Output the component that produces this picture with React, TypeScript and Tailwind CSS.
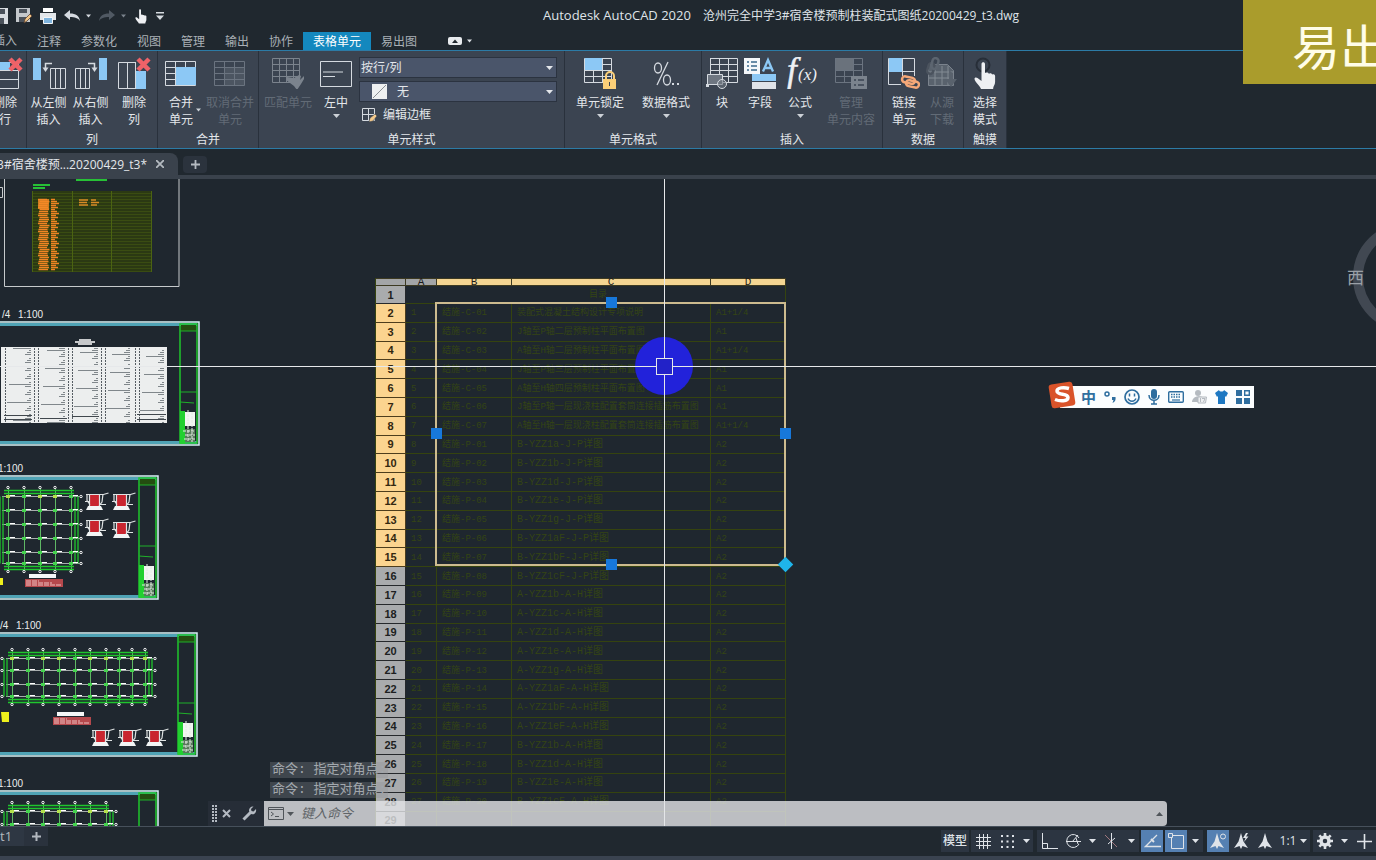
import type { ReactNode } from "react";
import clsx from "clsx";

const ui = "font-['Open_Sans','Noto_Sans_CJK_SC',sans-serif]";
const mono = "font-['Liberation_Mono','Noto_Sans_CJK_SC',monospace]";

const menuTabs = ["注释", "参数化", "视图", "管理", "输出", "协作", "表格单元", "易出图"];

const details: [string, string, string][] = [
  ["结施-C-01", "装配式混凝土结构设计专项说明", "A1+1/4"],
  ["结施-C-02", "J轴至P轴二层预制柱平面布置图", "A1"],
  ["结施-C-03", "A轴至H轴二层预制柱平面布置图", "A1+1/4"],
  ["结施-C-04", "J轴至P轴三层预制柱平面布置图", "A1"],
  ["结施-C-05", "A轴至H轴四层预制柱平面布置图", "A1"],
  ["结施-C-06", "J轴至P轴一层现浇柱配置套筒连接插筋布置图", "A1"],
  ["结施-C-07", "A轴至H轴一层现浇柱配置套筒连接插筋布置图", "A1+1/4"],
  ["结施-P-01", "B-YZZ1a-J-P详图", "A2"],
  ["结施-P-02", "B-YZZ1b-J-P详图", "A2"],
  ["结施-P-03", "B-YZZ1d-J-P详图", "A2"],
  ["结施-P-04", "B-YZZ1e-J-P详图", "A2"],
  ["结施-P-05", "B-YZZ1g-J-P详图", "A2"],
  ["结施-P-06", "B-YZZ1aF-J-P详图", "A2"],
  ["结施-P-07", "B-YZZ1bF-J-P详图", "A2"],
  ["结施-P-08", "B-YZZ1cF-J-P详图", "A2"],
  ["结施-P-09", "A-YZZ1b-A-H详图", "A2"],
  ["结施-P-10", "A-YZZ1c-A-H详图", "A2"],
  ["结施-P-11", "A-YZZ1d-A-H详图", "A2"],
  ["结施-P-12", "A-YZZ1e-A-H详图", "A2"],
  ["结施-P-13", "A-YZZ1g-A-H详图", "A2"],
  ["结施-P-14", "A-YZZ1aF-A-H详图", "A2"],
  ["结施-P-15", "A-YZZ1bF-A-H详图", "A2"],
  ["结施-P-16", "A-YZZ1eF-A-H详图", "A2"],
  ["结施-P-17", "B-YZZ1b-A-H详图", "A2"],
  ["结施-P-18", "B-YZZ1d-A-H详图", "A2"],
  ["结施-P-19", "B-YZZ1e-A-H详图", "A2"],
  ["结施-P-20", "B-YZZ1cF-A-H详图", "A2"],
  ["", "", ""],
];

function Caret({ className }: { className?: string }) {
  return (
    <svg aria-hidden width="7" height="4" viewBox="0 0 7 4" className={clsx("shrink-0", className)}>
      <path d="M0 0h7L3.5 4z" fill="currentColor" />
    </svg>
  );
}

function Icon({ w = 32, h = 32, children }: { w?: number; h?: number; children: ReactNode }) {
  return (
    <svg aria-hidden width={w} height={h} viewBox={`0 0 ${w} ${h}`} fill="none" className="shrink-0">
      {children}
    </svg>
  );
}

const sky = "#8cc8f5";
const line = "#d5dae0";
const dim = "#6b7480";
const RedX = ({ x, y }: { x: number; y: number }) => (
  <path d={`M${x} ${y}l11 11M${x + 11} ${y}l-11 11`} stroke="#ee6268" strokeWidth="4.500" />
);

const icons = {
  deleteRow: (
    <Icon w={35}>
      <path d="M2.500 5.500h28v26h-28zM2 13.500h29M2 22.500h29" stroke={line} />
      <path d="M2 5h20v8H2z" fill={sky} />
      <RedX x={22} y={2} />
    </Icon>
  ),
  insertLeft: (
    <Icon w={34}>
      <path d="M1 1h8v22H1z" fill={sky} />
      <path d="M18.500 11.500h15v20h-15zM23.500 11.500v20M28.500 11.500v20" stroke={line} />
      <path d="M20 6.500h-6.500v6" stroke={line} strokeWidth="1.500" />
      <path d="M10.500 10.500h6L13.500 15z" fill={line} />
    </Icon>
  ),
  insertRight: (
    <Icon w={34}>
      <path d="M25 1h8v22h-8z" fill={sky} />
      <path d="M1.500 11.500h14v20h-14zM6.500 11.500v20M11.500 11.500v20" stroke={line} />
      <path d="M14 6.500h6.500v6" stroke={line} strokeWidth="1.500" />
      <path d="M17.500 10.500h6L20.500 15z" fill={line} />
    </Icon>
  ),
  deleteColumn: (
    <Icon w={34}>
      <path d="M1.500 5.500h27v26h-27zM10.500 5v27" stroke={line} />
      <path d="M19 14h10v18H19z" fill={sky} />
      <path d="M19 5h11v9H19z" fill="#3b4451" />
      <path d="M18.500 5v27" stroke={line} />
      <RedX x={21} y={2} />
    </Icon>
  ),
  merge: (
    <Icon>
      <path d="M.5 4.500h30v24H.5zM0 10.500h31M0 16.500h11M0 22.500h11M10.500 4v25M20.500 4v7" stroke={line} />
      <path d="M11 10h20v18H11z" fill={sky} />
    </Icon>
  ),
  unmerge: (
    <Icon>
      <path d="M11 10h20v18H11z" fill="#4c5561" />
      <path d="M.5 4.500h30v24H.5zM0 10.500h31M0 16.500h31M0 22.500h31M10.500 4v25M20.500 4v25" stroke={dim} />
    </Icon>
  ),
  matchCell: (
    <Icon>
      <path d="M.5 1.500h27v24H.5zM0 7.500h28M0 13.500h28M0 19.500h28M7.500 1v25M14.500 1v25M21.500 1v25" stroke="#7b838d" />
      <path d="M15 20l7 1 5-3 2 1-1 4 4-4v3l-3 5-4 6-3-4-4-3-4-3z" fill="#7b838d" />
    </Icon>
  ),
  alignMiddle: (
    <Icon>
      <path d="M.5 4.500h31v25H.5z" stroke={line} />
      <path d="M3 15h20M3 19.500h12" stroke={line} />
    </Icon>
  ),
  cellLock: (
    <Icon w={33}>
      <path d="M.5 1.500h27v24H.5zM18.500 1v25M9.500 13v13M0 13.500h28M0 19.500h28M19 7.500h9" stroke={line} />
      <path d="M1 1h17v12H1z" fill={sky} />
      <path d="M22 23v-4a4 4 0 0 1 8 0v4" stroke="#fbcf78" strokeWidth="2" />
      <path d="M19 22h13v11H19z" fill="#fbcf78" />
      <path d="M25.500 25v4" stroke="#3b4451" />
    </Icon>
  ),
  percent: (
    <Icon w={28}>
      <ellipse cx="6" cy="11" rx="3.500" ry="5" stroke={line} strokeWidth="1.300" />
      <ellipse cx="15" cy="23" rx="3.500" ry="5" stroke={line} strokeWidth="1.300" />
      <path d="M16 5L5 28" stroke={line} strokeWidth="1.300" />
      <path d="M20 26h2v2h-2zM25 26h2v2h-2z" fill={line} />
    </Icon>
  ),
  block: (
    <Icon>
      <path d="M4.500 1.500h27v24H12M4.500 1v16M4 7.500h27M4 13.500h27M15 19.500h16M13.500 1v17M22.500 1v24" stroke={line} />
      <path d="M1.500 17.500h15v10H1.500z" fill="#6e7681" stroke={line} />
      <circle cx="16" cy="27" r="4.500" stroke={line} fill="#6e7681" fillOpacity=".6" />
      <path d="M0 27h3v3H0z" fill={line} />
    </Icon>
  ),
  field: (
    <Icon>
      <path d="M0 1h16v16H0z" fill="#f4f7fa" />
      <path d="M3 5h2M3 9h2M3 13h2M7 5h6M7 9h6M7 13h6" stroke="#3a6a8c" strokeWidth="1.500" />
      <path d="M8 17h24v7H8z" fill={sky} />
      <path d="M8 25h24v7H8z" fill="#e0e3e8" />
      <path d="M19 14.500L24 3l5 11.500M21 11h6.500" stroke={sky} strokeWidth="2.300" />
    </Icon>
  ),
  formula: (
    <Icon w={34}>
      <text x="4" y="25" fill="#eef0f3" stroke="#eef0f3" strokeWidth=".5" fontSize="35" fontStyle="italic" fontFamily="Liberation Serif, serif">f</text>
      <text x="15" y="23" fill="#eef0f3" fontSize="17" fontStyle="italic" fontFamily="Liberation Serif, serif">(x)</text>
    </Icon>
  ),
  manage: (
    <Icon>
      <path d="M0 1h19v12H0z" fill="#6a727c" />
      <path d="M.5 1.500h27v24H.5zM18.500 1v18M9.500 13v13M0 13.500h28M0 19.500h16M19 7.500h9" stroke={dim} />
      <path d="M16 19h16v13H16z" fill="#7b838d" />
      <path d="M19 23h2M19 28h2M23 23h6M23 28h6" stroke="#3b4451" strokeWidth="1.500" />
    </Icon>
  ),
  link: (
    <Icon>
      <path d="M.5 1.500h26v26H.5zM14.500 1v27M0 14.500h27" stroke={line} />
      <path d="M1 1h13v14H1z" fill={sky} />
      <path d="M13 19h19v13H13z" fill="#3b4451" />
      <g stroke="#f5a878" strokeWidth="2.500">
        <rect x="14" y="20" width="13" height="6" rx="3" transform="rotate(12 20 23)" />
        <rect x="18" y="24" width="13" height="6" rx="3" transform="rotate(12 25 27)" />
      </g>
    </Icon>
  ),
  download: (
    <Icon>
      <path d="M2.500 7.500h19l6 6v15h-25z" fill="#59626d" stroke="#7b838d" />
      <path d="M3 15h24M3 21h24M9 9v19M16 9v19M22 9v19" stroke="#838b94" />
      <rect x="2" y="6" width="6" height="11" rx="3" transform="rotate(15 5 11)" stroke="#4b535e" strokeWidth="2.500" />
      <rect x="6" y="1" width="6" height="11" rx="3" transform="rotate(15 9 6)" stroke="#5c6570" strokeWidth="2.500" />
      <path d="M23 14c3 0 4 3 4 8h4l-6 8-6-8h4z" fill="#59626d" />
    </Icon>
  ),
  touch: (
    <Icon w={24}>
      <circle cx="10" cy="8" r="6.500" stroke="#272e38" strokeWidth="2" />
      <Hand />
    </Icon>
  ),
};

function Hand() {
  return (
    <path
      d="M8.500 7c0-2.500 3.500-2.500 3.500 0v9c1-1 3.500-.8 3.800.7 1-1 3-.6 3.300.9 1.200-.7 3-.2 3 1.400v6c0 3-2 4-2 7H8c-1-3-6-7-6.500-10-.3-1.800 2-2 3-1l4 3z"
      fill="#eef0f3"
    />
  );
}

type ToolProps = {
  icon: ReactNode;
  lines: string[];
  width: string;
  dim?: boolean;
  menu?: boolean;
};

function Tool({ icon, lines, width, dim: off, menu }: ToolProps) {
  return (
    <button
      type="button"
      disabled={off}
      className={clsx(
        "flex shrink-0 flex-col items-center whitespace-nowrap text-xs leading-[17px]",
        width,
        off ? "text-[#626b76]" : "text-[#e4e7eb]",
      )}
    >
      <span className="mb-[5px] flex h-8 items-start">{icon}</span>
      {lines.map((l) => (
        <span key={l}>{l}</span>
      ))}
      {menu && <Caret className="mt-[3px] text-[#ccd1d7]" />}
    </button>
  );
}

function Panel({ title, width, children }: { title: string; width: string; children: ReactNode }) {
  return (
    <section className={clsx("flex shrink-0 flex-col border-r border-[#29313c]", width)}>
      <div className="flex flex-1 justify-center pt-[6px]">{children}</div>
      <h2 className="text-center text-xs leading-4 text-[#e4e7eb]">{title}</h2>
    </section>
  );
}

function QuickAccess() {
  return (
    <div className="flex w-[168px] shrink-0 items-center gap-2 text-[#d5dae0]">
      <button type="button" aria-label="保存" className="-ml-2">
        <Icon w={16} h={16}>
          <path d="M0 0h16v16H0z" fill="#d8dce0" />
          <path d="M3 1h10v5H3zM4 10h8v6H4z" fill="#4a515a" />
        </Icon>
      </button>
      <button type="button" aria-label="另存为">
        <Icon w={16} h={16}>
          <path d="M0 0h14v14H0z" fill="#c4c8cc" />
          <path d="M3 1h8v4H3zM3 9h7v5H3z" fill="#4a515a" />
          <path d="M8 15l1-4 5-5 2 2-5 5z" fill="#f3c88a" stroke="#5a4030" strokeWidth=".8" />
        </Icon>
      </button>
      <button type="button" aria-label="打印">
        <Icon w={16} h={16}>
          <path d="M3 0h10v4H3z" fill="#fff" />
          <path d="M0 5h16v7H0z" fill="#e3e6ea" />
          <path d="M3.500 9.500h9v6h-9z" fill="#7fb4de" stroke="#f3f5f7" />
        </Icon>
      </button>
      <button type="button" aria-label="放弃" className="flex items-center gap-[6px]">
        <Icon w={16} h={12}>
          <path d="M0 5l6-5v3.500c6 0 9 2 10 7.500-2-3-5-4-10-4v3z" fill="#d5dae0" />
        </Icon>
        <Caret className="w-[5px]" />
      </button>
      <button type="button" aria-label="重做" className="flex items-center gap-[6px]">
        <Icon w={16} h={12}>
          <path d="M16 5l-6-5v3.500C4 3.500 1 5.500 0 11c2-3 5-4 10-4v3z" fill="#505963" />
        </Icon>
        <Caret className="w-[5px] text-[#7b838d]" />
      </button>
      <button type="button" aria-label="触摸">
        <svg aria-hidden width="14" height="16" viewBox="0 3 24 30"><Hand /></svg>
      </button>
      <button type="button" aria-label="自定义快速访问工具栏">
        <Icon w={8} h={8}>
          <path d="M0 0h8v1.500H0zM0 3.500h8L4 8z" fill="#d5dae0" />
        </Icon>
      </button>
    </div>
  );
}

function Ribbon() {
  return (
    <div className="flex h-[99px] shrink-0 border-y border-[#2c7ba6] bg-[#20282f]">
      <div className="flex bg-[#3b4451]">
        <section className="flex w-[27px] shrink-0 justify-end overflow-hidden border-r border-[#29313c] pt-[6px]">
          <Tool icon={icons.deleteRow} lines={["删除", "行"]} width="w-[42px]" />
        </section>
        <Panel title="列" width="w-[131px]">
          <Tool icon={icons.insertLeft} lines={["从左侧", "插入"]} width="w-[42px]" />
          <Tool icon={icons.insertRight} lines={["从右侧", "插入"]} width="w-[42px]" />
          <Tool icon={icons.deleteColumn} lines={["删除", "列"]} width="w-[45px]" />
        </Panel>
        <Panel title="合并" width="w-[101px]">
          <div className="relative">
            <Tool icon={icons.merge} lines={["合并", "单元"]} width="w-[44px]" />
            <Caret className="absolute top-[51px] right-[2px] w-[5px] text-[#ccd1d7]" />
          </div>
          <Tool icon={icons.unmerge} lines={["取消合并", "单元"]} width="w-[54px]" dim />
        </Panel>
        <Panel title="单元样式" width="w-[306px]">
          <Tool icon={icons.matchCell} lines={["匹配单元"]} width="w-[54px]" dim />
          <Tool icon={icons.alignMiddle} lines={["左中"]} width="w-[42px]" menu />
          <div className="mr-[5px] ml-[2px] flex w-[198px] flex-col gap-[3px] text-xs text-[#e4e7eb]">
            <div className="relative flex h-[21px] items-center border border-[#2b3340] bg-[#4a556a]">
              <select aria-label="按行/列" className="h-full w-full appearance-none px-px">
                <option>按行/列</option>
              </select>
              <Caret className="pointer-events-none absolute right-[3px]" />
            </div>
            <div className="relative flex h-[21px] items-center border border-[#2b3340] bg-[#4a556a]">
              <span className="ml-3 flex">
                <Icon w={15} h={15}>
                  <path d="M0 0h15v15H0z" fill="#eef0f1" />
                  <path d="M1 14L14 1" stroke="#8b8f94" />
                </Icon>
              </span>
              <select aria-label="单元背景" className="h-full w-full appearance-none px-[10px]">
                <option>无</option>
              </select>
              <Caret className="pointer-events-none absolute right-[3px]" />
            </div>
            <button type="button" className="flex items-center gap-[6px] pl-[3px] leading-5">
              <Icon w={15} h={15}>
                <path d="M.5.500h12v12H.5zM6.500 0v13M0 6.500h13" stroke={line} />
                <path d="M7 14l1-4 5-4 2 2-4 5z" fill="#f3c88a" stroke="#3b4451" strokeWidth=".6" />
              </Icon>
              编辑边框
            </button>
          </div>
        </Panel>
        <Panel title="单元格式" width="w-[137px]">
          <Tool icon={icons.cellLock} lines={["单元锁定"]} width="w-[66px]" menu />
          <Tool icon={icons.percent} lines={["数据格式"]} width="w-[66px]" menu />
        </Panel>
        <Panel title="插入" width="w-[181px]">
          <Tool icon={icons.block} lines={["块"]} width="w-[38px]" />
          <Tool icon={icons.field} lines={["字段"]} width="w-[38px]" />
          <Tool icon={icons.formula} lines={["公式"]} width="w-[42px]" menu />
          <Tool icon={icons.manage} lines={["管理", "单元内容"]} width="w-[60px]" dim />
        </Panel>
        <Panel title="数据" width="w-[81px]">
          <Tool icon={icons.link} lines={["链接", "单元"]} width="w-[38px]" />
          <Tool icon={icons.download} lines={["从源", "下载"]} width="w-[38px]" dim />
        </Panel>
        <Panel title="触摸" width="w-[43px]">
          <Tool icon={icons.touch} lines={["选择", "模式"]} width="w-[40px]" />
        </Panel>
      </div>
    </div>
  );
}

// sheet border with the green title block on its right side
function Sheet({ y, right, h = 123 }: { y: number; right: number; h?: number }) {
  const s = right - 19;
  return (
    <g fill="none">
      <path d={`M0 ${y + 2.500}H${right - 2}M0 ${y + h - 2.500}H${right - 2}`} stroke="#4fa3b5" strokeWidth="3" />
      <path d={`M0 ${y}H${right}V${y + h}H0`} stroke="#d8f4f6" strokeWidth="1.500" />
      <path d={`M${s + 1} ${y + 3}h15v6h-15z`} fill="#244d10" />
      <path d={`M${s} ${y + 2}h17v${h - 4}h-17z`} stroke="#1fc62c" strokeWidth="1.500" />
      <path d={`M${s} ${y + 9}h17M${s} ${y + 70}h17M${s} ${y + 80}l14 1`} stroke="#1fb02a" />
      <path d={`M${s} ${y + 89}h5v33h-5z`} fill="#22d030" />
      <path d={`M${s + 5} ${y + 90}h10v14h-10z`} fill="#f2f5f2" />
      <path d={`M${s + 5} ${y + 107}h10v13h-10z`} fill="#587a5c" />
      <path d={`M${s + 3} ${y + 109}h12M${s + 5} ${y + 113}h10M${s + 4} ${y + 117}h11M${s + 8} ${y + 88}v32M${s + 12} ${y + 90}v30`} stroke="#e4ece4" strokeDasharray="3 1" />
    </g>
  );
}

function FloorPlan({ cols, rows }: { cols: number[]; rows: number[] }) {
  const l = cols[0];
  const r = cols[cols.length - 1];
  const t = rows[0];
  const b = rows[rows.length - 1];
  return (
    <g fill="none">
      {rows.map((y) => (
        <path key={y} d={`M${l - 6} ${y}H${r + 8}`} stroke="#a8aeae" />
      ))}
      {cols.map((x) => (
        <path key={x} d={`M${x + 0.5} ${t - 8}V${b + 7}`} stroke="#5fb865" />
      ))}
      <path
        d={`M${l - 4} ${t - 6}H${r + 3}M${l - 4} ${t - 3}H${r + 3}M${l - 4} ${b + 3}H${r + 3}M${l - 4} ${b + 6}H${r + 3}M${l - 8} ${t}V${b}M${l - 5} ${t}V${b}M${r + 4} ${t}V${b}M${r + 7} ${t}V${b}`}
        stroke="#1fc62d"
        strokeWidth="1.300"
      />
      {rows.map((y) =>
        cols.map((x, i) => (
          <g key={`${x}-${y}`}>
            <path d={`M${x - 2} ${y - 1.500}h4v3h-4z`} fill={y === t && i % 3 !== 1 ? "#b4e04c" : "#43d34d"} />
            <path d={`M${x + 2} ${y - 1}h5`} stroke="#fff" />
          </g>
        )),
      )}
      {cols.map((x) => (
        <g key={x} stroke="#f4f6f6">
          <circle cx={x} cy={t - 9} r="1.200" />
          <circle cx={x} cy={b + 8} r="1.200" />
        </g>
      ))}
      {rows.map((y) => (
        <g key={y} stroke="#f4f6f6">
          <circle cx={l - 10} cy={y} r="1.200" />
          <circle cx={r + 10} cy={y} r="1.200" />
        </g>
      ))}
    </g>
  );
}

function Section({ x, y }: { x: number; y: number }) {
  return (
    <g>
      <path d={`M${x + 4} ${y + 1}h9v11H${x + 4}z`} fill="#c9252f" />
      <path
        d={`M${x} ${y + .5}h17.500l5-1.500M${x + 1} ${y + .5}v6l3 4M${x + 17} ${y}l-1 8-3 4M${x + 3.500} ${y}v12M${x + 13.500} ${y}v12M${x - 1} ${y + 7.500}h5M${x + 13} ${y + 10.500}h7`}
        fill="none"
        stroke="#dfe3e3"
        strokeWidth="1.200"
      />
      <path d={`M${x + 2} ${y + 12}h13l2 4H${x}z`} fill="#f2f5f5" />
    </g>
  );
}

function Note({ x, y }: { x: number; y: number }) {
  return (
    <g>
      <path d={`M${x + 4} ${y - 5}h27v4h-27z`} fill="#f5f7f7" />
      <path d={`M${x} ${y}h38v8H${x}z`} fill="#b5484c" />
      <path d={`M${x + 1} ${y + 2}h13M${x + 1} ${y + 4}h26M${x + 1} ${y + 6}h35`} stroke="#efc0c0" strokeDasharray="5 1" />
    </g>
  );
}

const scheduleBands = [3, 37, 70, 102, 136];

function Drawings() {
  return (
    <svg aria-hidden width="205" height="660" viewBox="0 179 205 660" className="absolute top-0 left-0">
      {/* quantity sheet */}
      <path d="M4.500 179v107.500h174.500V179" fill="none" stroke="#c6cacc" />
      <path d="M0 187.500h2.500v10H0" fill="none" stroke="#c6cacc" />
      <path d="M76 179h31v2H76zM33 184h17v2H33zM33 187h12v2H33z" fill="#27c136" />
      <path d="M32 191h120v81H32z" fill="#2b3913" />
      {Array.from({ length: 27 }, (_, i) => (
        <path key={i} d={`M32 ${193.500 + i * 3}h120`} stroke="#3a4c12" />
      ))}
      <path d="M32.500 191v81M72.500 191v81M111.500 191v81M151.500 191v81" stroke="#4b6312" />
      {Array.from({ length: 36 }, (_, i) => (
        <path
          key={i}
          d={`M${38 + ((i * 3) % 4) / 2} ${199.500 + i * 2}h${9 + ((i * 5) % 3) / 2}M${51} ${199.500 + i * 2}h${4 + ((i * 7) % 5)}`}
          stroke="#f08423"
          strokeWidth="1.700"
        />
      ))}
      <path d="M38 199h11v10H38z" fill="#f58a26" fillOpacity=".8" />
      <path d="M79 200h9M79 202.500h8M79 205h9M91 200h5M91 202.500h8M91 205h6" stroke="#d98a26" strokeWidth="1.500" />

      {/* general notes */}
      <Sheet y={322} right={199} />
      <path d="M75 342h20M79 340h12M78 344h14" stroke="#fff" strokeWidth="1.500" />
      <path d="M1 347h166v76H1z" fill="#eceeee" />
      {scheduleBands.map((x, b) =>
        Array.from({ length: 38 }, (_, i) => {
          const w = ((i * 13 + b * 7) % 4) * 2 + ((i * 7 + b * 11) % 9 === 0 ? 18 : 0);
          return <path key={`${b}-${i}`} d={`M${x + 28 - w} ${348.500 + i * 2}h${w}`} stroke="#656c71" strokeWidth=".8" />;
        }),
      )}
      <path d="M5.500 348v75M34.500 348v75M38.500 348v75M68.500 348v75M72.500 348v75M101.500 348v75M105.500 348v75M135.500 348v75M139.500 348v75" stroke="#555c62" strokeDasharray="2 1" />
      <path d="M4 415.500h28M4 419.500h28M40 418.500h27M72 416.500h27M137 414.500h29M137 419.500h29" stroke="#40474d" />

      <Sheet y={476} right={158} />
      <FloorPlan cols={[8, 24, 40, 55, 71]} rows={[496.500, 510.500, 524.500, 538.500, 552.500, 563.500]} />
      <Section x={86} y={494} />
      <Section x={113} y={494} />
      <Section x={86} y={520} />
      <Section x={113} y={522} />
      <path d="M0 578h3v7H0z" fill="#eef01c" />
      <Note x={25} y={579} />

      <Sheet y={633} right={197} />
      <FloorPlan cols={[12, 28, 43, 59, 75, 90, 106, 119, 132, 145]} rows={[658.500, 670.500, 684.500, 696.500]} />
      <path d="M1 712h8v10H2z" fill="#eef01c" />
      <Note x={53} y={717} />
      <Section x={92} y={730} />
      <Section x={119} y={730} />
      <Section x={146} y={730} />

      <Sheet y={791} right={158} />
      <FloorPlan cols={[12, 28, 43, 59, 75, 90, 106]} rows={[811.500, 824.500, 838.500]} />

      <g fill="#eceeee" fontFamily="Liberation Sans, sans-serif" fontSize="10">
        <text x="2" y="318">/4</text>
        <text x="18" y="318">1:100</text>
        <text x="-2" y="472">1:100</text>
        <text x="0" y="629">/4</text>
        <text x="16" y="629">1:100</text>
        <text x="-2" y="787">1:100</text>
      </g>
    </svg>
  );
}

const columnHead = "h-[8px] border border-l-0 border-[#3d3a22] p-0 text-center font-normal";
const bodyCell = "border-r border-b border-[#35430f] p-0 pt-px pl-[5px] font-normal";

function Catalogue() {
  return (
    <div className="absolute top-[99px] left-[375px]">
      <table
        className={clsx(
          "h-[551px] w-[411px] table-fixed border-separate border-spacing-0 border-l border-[#35430f] text-left text-[9px] leading-[10px] text-[#344414]",
          mono,
        )}
      >
        <colgroup>
          <col className="w-[30px]" />
          <col className="w-[31px]" />
          <col className="w-[75px]" />
          <col className="w-[199px]" />
          <col className="w-[75px]" />
        </colgroup>
        <thead>
          <tr className="text-[11px] leading-[6px] text-[#1c1c1c]">
            <th aria-label="行" className={clsx(columnHead, "bg-[#a3a5a7]")} />
            <th className={clsx(columnHead, "bg-[#a3a5a7]")}>A</th>
            <th className={clsx(columnHead, "bg-[#f4d592]")}>B</th>
            <th className={clsx(columnHead, "bg-[#f4d592]")}>C</th>
            <th className={clsx(columnHead, "bg-[#f4d592]")}>D</th>
          </tr>
        </thead>
        <tbody>
          <tr className="h-[18px]">
            <RowHead n={1} />
            <td colSpan={4} className={clsx(bodyCell, "pl-0 text-center")}>目录</td>
          </tr>
          {details.map(([no, name, size], i) => (
            <tr key={i}>
              <RowHead n={i + 2} />
              <td className={bodyCell}>{no && i + 1}</td>
              <td className={bodyCell}>{no}</td>
              <td className={clsx(bodyCell, "whitespace-nowrap", i > 6 && "text-[10px]")}>{name}</td>
              <td className={bodyCell}>{size}</td>
            </tr>
          ))}
        </tbody>
      </table>

      {/* selected cell range with its grips */}
      <div className="absolute top-[24px] left-[60px] h-[264px] w-[351px] border-2 border-[#cdbb8f]">
        <Grip className="-top-[7px] left-[169px]" />
        <Grip className="top-[124px] -left-[6px]" />
        <Grip className="top-[124px] -right-[7px]" />
        <Grip className="-bottom-[6px] left-[169px]" />
        <span className="absolute -right-[7px] -bottom-[6px] size-[11px] rotate-45 bg-[#1fb4ea]" />
      </div>
    </div>
  );
}

function RowHead({ n }: { n: number }) {
  const picked = n > 1 && n < 16;
  return (
    <th
      scope="row"
      className={clsx(
        "border-r border-b p-0 text-center font-['Liberation_Sans',sans-serif] text-[11px] font-bold",
        picked ? "border-[#4d3d1c] bg-[#fbd48f] text-[#33270f]" : "border-[#25282b] bg-[#a9abad] text-[#1d1f21]",
      )}
    >
      {n}
    </th>
  );
}

function Grip({ className }: { className: string }) {
  return <span className={clsx("absolute size-[11px] bg-[#1778db]", className)} />;
}

function Crosshair() {
  return (
    <>
      <div className="absolute top-[158px] left-[635px] size-[58px] rounded-full bg-[#2222da]" />
      <div className="absolute top-0 bottom-0 left-[664px] w-px bg-[#e6e8ea]" />
      <div className="absolute top-[187px] right-0 left-0 h-px bg-[#e6e8ea]" />
      <div className="absolute top-[179px] left-[656px] size-[17px] border border-[#e6e8ea] bg-[#2222c8]" />
    </>
  );
}

function ImeBar() {
  return (
    <div className="absolute top-[207px] left-[1060px] flex h-[22px] items-center gap-2 bg-[#fbfdfe] pr-1 pl-[21px] text-[#2f6e9f]">
      <svg aria-hidden width="30" height="30" viewBox="0 0 30 30" className="absolute -top-[6px] -left-[13px]">
        <rect x="3" y="3" width="24" height="24" rx="3" fill="#d9532a" transform="rotate(-9 15 15)" />
        <path d="M22 8.500c-5-1.500-12-1-12 2.500 0 4.500 11 2 11 6.500 0 4-8 4-13 2" fill="none" stroke="#fff" strokeWidth="3.500" />
      </svg>
      <button type="button" className="text-[15px] leading-[22px] font-bold">中</button>
      <button type="button" aria-label="标点">
        <Icon w={12} h={16}>
          <circle cx="3" cy="5" r="2" stroke="currentColor" strokeWidth="1.500" />
          <path d="M8 8h3.500c.5 3-.5 5-3 6l1-3H8z" fill="currentColor" />
        </Icon>
      </button>
      <button type="button" aria-label="表情">
        <Icon w={16} h={16}>
          <circle cx="8" cy="8" r="7" stroke="currentColor" strokeWidth="1.700" />
          <path d="M5.500 4.500v3M10.500 4.500v3M4 9.500c1.500 3.500 6.500 3.500 8 0" stroke="currentColor" strokeWidth="1.500" />
        </Icon>
      </button>
      <button type="button" aria-label="语音">
        <Icon w={12} h={16}>
          <rect x="3" y="0" width="6" height="10" rx="3" fill="currentColor" />
          <path d="M1 6c0 7 10 7 10 0M6 11v4M3 15h6" stroke="currentColor" strokeWidth="1.500" />
        </Icon>
      </button>
      <button type="button" aria-label="软键盘">
        <Icon w={16} h={12}>
          <rect x=".7" y=".7" width="14.600" height="10.600" rx="1" stroke="currentColor" strokeWidth="1.400" />
          <path d="M3 3.500h10M3 6h10" stroke="currentColor" strokeWidth="1.500" strokeDasharray="1.500 1" />
          <path d="M4 9h8" stroke="currentColor" strokeWidth="1.200" />
        </Icon>
      </button>
      <button type="button" aria-label="登录" className="text-[#b4bac0]">
        <Icon w={15} h={16}>
          <circle cx="6" cy="4" r="3" fill="currentColor" />
          <path d="M0 13c0-7 12-7 12-3v3z" fill="currentColor" />
          <path d="M6 8h8.500l-1 6H6z" fill="#eef0f2" stroke="currentColor" />
          <path d="M8.500 9v4M10 9.500h3L11.500 13" stroke="currentColor" />
        </Icon>
      </button>
      <button type="button" aria-label="皮肤" className="text-[#1e78c2]">
        <Icon w={13} h={14}>
          <path d="M4 0c.5 2 4.500 2 5 0l4 3-2 4-1-1v8H3V6L2 7 0 3z" fill="currentColor" />
        </Icon>
      </button>
      <button type="button" aria-label="工具箱">
        <Icon w={14} h={14}>
          <path d="M0 0h6v6H0zM0 8h6v6H0zM8 8h6v6H8z" fill="currentColor" />
          <path d="M8.700.700h4.600v4.600H8.700z" stroke="currentColor" strokeWidth="1.400" />
        </Icon>
      </button>
    </div>
  );
}

function CommandLine() {
  return (
    <div className="absolute right-[209px] bottom-0 left-[208px]">
      <div className={clsx("ml-[62px] flex flex-col items-start gap-1 pb-[3px] text-[13px] leading-4 text-[#a2a8ad]", mono)}>
        <p className="bg-[#8a8f94]/30 px-[2px]">命令: 指定对角点:</p>
        <p className="bg-[#8a8f94]/30 px-[2px]">命令: 指定对角点:</p>
      </div>
      <div className="flex h-[25px]">
        <div className="flex w-14 items-center gap-[5px] bg-[#262d37] pl-1 text-[#b4bac2]">
          <Icon w={5} h={17}>
            <path d="M1 0v17M4 0v17" stroke="currentColor" strokeWidth="2" strokeDasharray="2 1" />
          </Icon>
          <button type="button" aria-label="关闭">
            <Icon w={9} h={9}>
              <path d="M1 1l7 7M8 1L1 8" stroke="currentColor" strokeWidth="2" />
            </Icon>
          </button>
          <button type="button" aria-label="自定义" className="ml-[6px]">
            <Icon w={15} h={15}>
              <path d="M1.500 13.500l7-7" stroke="currentColor" strokeWidth="3" />
              <path d="M14 3l-2.500 2.500-2-.5-.5-2L11.500.500C8 0 5.500 4 8 7s7 .500 6-4z" fill="currentColor" />
            </Icon>
          </button>
        </div>
        <div className="flex flex-1 items-center gap-[3px] rounded-r-sm bg-[#e4e5e7]/80 px-1 text-[#50555a]">
          <Icon w={16} h={13}>
            <path d="M.5.500h15v12H.5zM0 2.500h16" stroke="currentColor" />
            <path d="M3 5l2.500 2L3 9M7 9.500h4" stroke="currentColor" />
          </Icon>
          <Caret />
          <input
            aria-label="命令"
            placeholder="键入命令"
            className="ml-1 min-w-0 flex-1 text-[13px] italic outline-none placeholder:text-[#5f6468]"
          />
          <Caret className="rotate-180" />
        </div>
      </div>
    </div>
  );
}

function Canvas() {
  return (
    <main className="relative min-h-0 flex-1 overflow-hidden bg-[#1f272f]">
      <Drawings />
      <Catalogue />
      <Crosshair />
      <ImeBar />
      <div className="absolute top-[48px] right-0 h-[100px] w-[29px]">
        <svg aria-hidden width="24" height="100" viewBox="0 0 24 100" className="absolute right-0">
          <circle cx="56" cy="50" r="50" fill="none" stroke="#414852" strokeWidth="10" />
        </svg>
        <span className="absolute top-[39px] left-0 text-[17px] leading-6 text-[#9aa0a7]">西</span>
      </div>
      <CommandLine />
    </main>
  );
}

type StatusProps = { label: string; width: string; active?: boolean; children: ReactNode };

function Status({ label, width, active, children }: StatusProps) {
  return (
    <button
      type="button"
      aria-label={label}
      className={clsx("flex h-[22px] shrink-0 items-center justify-center", width, active ? "bg-[#5580b2]" : "bg-[#2c3541]")}
    >
      {children}
    </button>
  );
}

const annot = "M8 0l2.500 8.500L15 15l-5.500-2-1.500 3-1.500-3L1 15l4.500-6.500z";

function StatusBar() {
  return (
    <footer className="flex h-[34px] shrink-0 items-start justify-between border-t border-b-4 border-t-[#46505b] border-b-[#3a4350] bg-[#20282f] text-[#dfe3e8]">
      <div className="flex h-[19px] items-center text-[13px] text-[#b2b8bf]">
        <button type="button" className="bg-[#2e3743] pr-3">t1</button>
        <button type="button" aria-label="新建布局" className="flex h-[19px] w-6 items-center justify-center bg-[#2a323d]">
          <Icon w={9} h={9}>
            <path d="M4.500 0v9M0 4.500h9" stroke="currentColor" strokeWidth="2" />
          </Icon>
        </button>
      </div>
      <div className="flex shrink-0 items-center pt-[3px]">
        <button type="button" className="mr-[2px] h-[22px] w-[28px] bg-[#2c3541] text-xs font-medium whitespace-nowrap">模型</button>
        <Status label="栅格" width="w-[24px]">
          <Icon w={15} h={15}>
            <path d="M3.500 0v15M7.500 0v15M11.500 0v15M0 3.500h15M0 7.500h15M0 11.500h15" stroke="currentColor" />
          </Icon>
        </Status>
        <Status label="捕捉" width="w-[24px]">
          <Icon w={13} h={13}>
            <path d="M0 1h13M0 6.500h13M0 12h13" stroke="currentColor" strokeWidth="2" strokeDasharray="2 3.500" />
          </Icon>
        </Status>
        <Status label="捕捉设置" width="w-[14px]"><Caret /></Status>
        <span className="w-1" />
        <Status label="正交" width="w-[24px]">
          <Icon w={17} h={17}>
            <path d="M1.500 0v15.500H17M1.500 10.500h5v5" stroke="currentColor" />
          </Icon>
        </Status>
        <Status label="极轴" width="w-[24px]">
          <Icon w={17} h={16}>
            <path d="M14 5A6.500 6.500 0 1 0 14 11M1 8.500h15M7.500 8.500L13 2" stroke="currentColor" />
            <path d="M11 5l2 6" stroke="currentColor" />
          </Icon>
        </Status>
        <Status label="极轴设置" width="w-[14px]"><Caret /></Status>
        <Status label="等轴测" width="w-[24px]">
          <Icon w={14} h={16}>
            <path d="M1 2l12 12" stroke="#a0767c" />
            <path d="M7.500 0v16M4 11l7-6" stroke="currentColor" />
          </Icon>
        </Status>
        <Status label="等轴测设置" width="w-[16px]"><Caret /></Status>
        <span className="w-[2px]" />
        <Status label="对象追踪" width="w-[22px]" active>
          <Icon w={17} h={14}>
            <path d="M13 1L1.500 12.500H17" stroke="currentColor" strokeWidth="1.300" />
            <path d="M7 5l3 3" stroke="currentColor" strokeWidth="2" />
          </Icon>
        </Status>
        <span className="w-[2px]" />
        <Status label="对象捕捉" width="w-[22px]" active>
          <Icon w={17} h={16}>
            <path d="M3.500 2.500h12v13h-12z" stroke="currentColor" />
            <path d="M.5.500h4v4h-4z" stroke="currentColor" fill="#5580b2" />
          </Icon>
        </Status>
        <Status label="捕捉模式" width="w-[16px]"><Caret /></Status>
        <span className="w-1" />
        <Status label="注释可见性" width="w-[22px]" active>
          <Icon w={18} h={16}>
            <path d={annot} fill="currentColor" />
            <circle cx="14" cy="3.500" r="2.500" stroke="currentColor" />
          </Icon>
        </Status>
        <Status label="自动缩放" width="w-[24px]">
          <Icon w={17} h={16}>
            <path d={annot} fill="currentColor" />
            <path d="M13 0l-3 5h2.500L11 9l4.500-5.500H13L15 0z" fill="currentColor" />
          </Icon>
        </Status>
        <Status label="注释比例" width="w-[24px]">
          <Icon w={16} h={16}><path d={annot} fill="currentColor" /></Icon>
        </Status>
        <button type="button" className="flex h-[22px] w-[33px] items-center justify-center gap-1 bg-[#2c3541] text-xs">
          1:1 <Caret />
        </button>
        <span className="w-[3px]" />
        <Status label="切换工作空间" width="w-[24px]">
          <Icon w={16} h={16}>
            <circle cx="8" cy="8" r="4" stroke="currentColor" strokeWidth="3.500" />
            <path d="M8 0v3M8 13v3M0 8h3M13 8h3M2.300 2.300l2 2M11.700 11.700l2 2M2.300 13.700l2-2M11.700 4.300l2-2" stroke="currentColor" strokeWidth="2.600" />
          </Icon>
        </Status>
        <Status label="工作空间" width="w-[15px]"><Caret /></Status>
        <Status label="注释监视器" width="w-[24px]">
          <Icon w={15} h={15}>
            <path d="M7.500 0v15M0 7.500h15" stroke="currentColor" strokeWidth="1.600" />
          </Icon>
        </Status>
      </div>
    </footer>
  );
}

export default function App() {
  return (
    <div className={clsx("relative flex h-screen flex-col overflow-hidden bg-[#20282f] text-[#dfe3e8]", ui)}>
      <header className="flex h-8 shrink-0 items-center">
        <QuickAccess />
        <h1 className="flex flex-1 items-center pl-[375px] whitespace-nowrap">
          <span className="text-[13px]">Autodesk AutoCAD 2020</span>
          <span className="ml-3 text-xs">沧州完全中学3#宿舍楼预制柱装配式图纸20200429_t3.dwg</span>
        </h1>
      </header>

      <nav className="flex h-[18px] shrink-0 items-center text-xs leading-5 whitespace-nowrap text-[#aab0b6]">
        <span className="flex w-[27px] justify-end pr-[10px]">
          <a href="#insert">插入</a>
        </span>
        {menuTabs.map((t) => (
          <a key={t} href={`#${t}`} className={clsx("h-[18px] px-[10px]", t === "表格单元" && "bg-[#1488be] text-white")}>
            {t}
          </a>
        ))}
        <button type="button" aria-label="最小化功能区" className="ml-[21px] flex items-center gap-[5px] text-[#dfe3e8]">
          <Icon w={14} h={8}>
            <rect width="14" height="8" rx="2" fill="#e8ebee" />
            <path d="M4 6h6L7 2.500z" fill="#20282f" />
          </Icon>
          <Caret className="w-[5px]" />
        </button>
      </nav>

      <Ribbon />

      <div className="flex h-[30px] shrink-0 items-end border-b-4 border-[#3a424c] text-xs whitespace-nowrap">
        <div className="flex h-[22px] w-[178px] items-center justify-between rounded-tr-lg bg-[#3a424c] pr-[14px]">
          <span className="flex w-[147px] justify-end pt-px text-[#e4e7eb]">3#宿舍楼预...20200429_t3*</span>
          <button type="button" aria-label="关闭图纸" className="text-[#b4bac0]">
            <Icon w={8} h={8}>
              <path d="M0 0l8 8M8 0L0 8" stroke="currentColor" strokeWidth="1.800" />
            </Icon>
          </button>
        </div>
        <button type="button" aria-label="新图形" className="mb-[2px] ml-[5px] flex h-[17px] w-6 items-center justify-center rounded bg-[#2b333d] text-[#b4bac0]">
          <Icon w={9} h={9}>
            <path d="M4.500 0v9M0 4.500h9" stroke="currentColor" strokeWidth="1.800" />
          </Icon>
        </button>
      </div>

      <Canvas />
      <StatusBar />

      <div className="absolute top-0 right-0 h-[84px] w-[133px] overflow-hidden bg-[#aa9c2c] pl-[49px] text-[48px] leading-[94px] whitespace-nowrap text-[#fffde8]">
        易出
      </div>
    </div>
  );
}
